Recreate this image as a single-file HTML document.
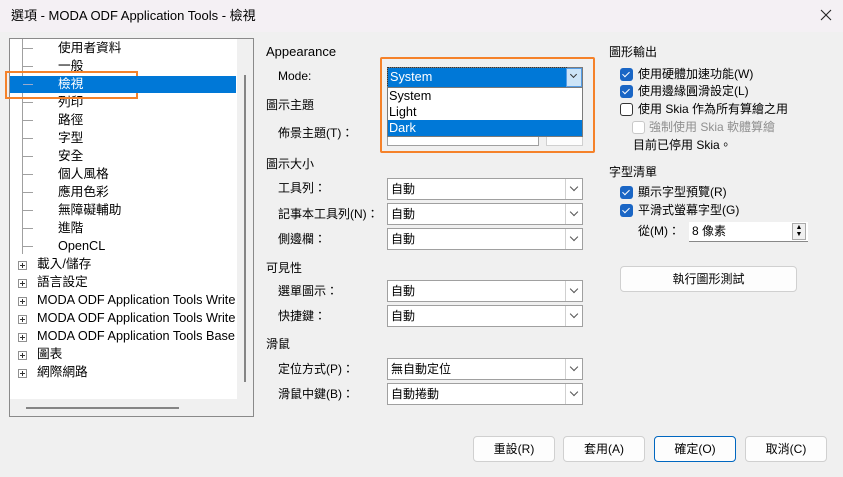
<!DOCTYPE html>
<html><head><meta charset="utf-8"><style>
*{margin:0;padding:0;box-sizing:border-box}
body{width:843px;height:477px;overflow:hidden;background:#f0f0f0;font-family:"Liberation Sans","Noto Sans CJK TC",sans-serif;font-size:12px;color:#000;position:relative}
.a{position:absolute;white-space:nowrap;line-height:16px}
.t{font-size:12.7px}
.title{position:absolute;left:0;top:0;width:843px;height:32px;background:#f4f0f4;}
.combo{position:absolute;height:22px;background:#fff;border:1px solid #a0a0a0;}
.combo span{position:absolute;left:3px;top:2px;line-height:16px}
.combo i{position:absolute;right:0;top:0;width:17px;height:20px;border-left:1px solid #d0d0d0}
.combo i:after{content:"";position:absolute;left:5px;top:5px;width:5px;height:5px;border-right:1px solid #555;border-bottom:1px solid #555;transform:rotate(45deg)}
.cb{position:absolute;width:13px;height:13px;border-radius:3px;background:#1a66c5}
.cb:after{content:"";position:absolute;left:4px;top:2px;width:3px;height:6px;border-right:1.5px solid #fff;border-bottom:1.5px solid #fff;transform:rotate(45deg)}
.cbe{position:absolute;width:13px;height:13px;border-radius:3px;border:1px solid #333;background:#fff}
.btn{position:absolute;height:26px;background:#fdfdfd;border:1px solid #d0d0d0;border-radius:4px;text-align:center;line-height:24px}
.dash{position:absolute;width:10px;height:1px;background:#a0a0a0}
.plus{position:absolute;width:9px;height:9px;border:1px solid #909090;background:#fff}
.plus:before{content:"";position:absolute;left:1px;top:3px;width:5px;height:1px;background:#333}
.plus:after{content:"";position:absolute;left:3px;top:1px;width:1px;height:5px;background:#333}
</style></head><body>
<div class="title"></div>
<div class="a" style="left:11px;top:8px;font-size:13px">選項 - MODA ODF Application Tools - 檢視</div>
<svg style="position:absolute;left:820px;top:9px" width="12" height="12"><path d="M1 1L11 11M11 1L1 11" stroke="#222" stroke-width="1.1"/></svg>

<div style="position:absolute;left:9px;top:38px;width:245px;height:379px;border:1px solid #8a8a8a;background:#f0f0f0"></div>
<div style="position:absolute;left:10px;top:39px;width:227px;height:360px;background:#fff"></div>
<div style="position:absolute;left:22px;top:39px;width:1px;height:215px;background:#a0a0a0"></div>
<div style="position:absolute;left:244px;top:75px;width:2px;height:307px;background:#858585"></div>
<div style="position:absolute;left:26px;top:407px;width:153px;height:2px;background:#858585"></div>

<div class="dash" style="left:23px;top:48px"></div><div class="a t" style="left:58px;top:40px">使用者資料</div>
<div class="dash" style="left:23px;top:66px"></div><div class="a t" style="left:58px;top:58px">一般</div>
<div class="dash" style="left:23px;top:102px"></div><div class="a t" style="left:58px;top:94px">列印</div>
<div class="dash" style="left:23px;top:120px"></div><div class="a t" style="left:58px;top:112px">路徑</div>
<div class="dash" style="left:23px;top:138px"></div><div class="a t" style="left:58px;top:130px">字型</div>
<div class="dash" style="left:23px;top:156px"></div><div class="a t" style="left:58px;top:148px">安全</div>
<div class="dash" style="left:23px;top:174px"></div><div class="a t" style="left:58px;top:166px">個人風格</div>
<div class="dash" style="left:23px;top:192px"></div><div class="a t" style="left:58px;top:184px">應用色彩</div>
<div class="dash" style="left:23px;top:210px"></div><div class="a t" style="left:58px;top:202px">無障礙輔助</div>
<div class="dash" style="left:23px;top:228px"></div><div class="a t" style="left:58px;top:220px">進階</div>
<div class="dash" style="left:23px;top:246px"></div><div class="a t" style="left:58px;top:238px">OpenCL</div>
<div class="plus" style="left:18px;top:261px"></div><div class="a t" style="left:37px;top:256px">載入/儲存</div>
<div class="plus" style="left:18px;top:279px"></div><div class="a t" style="left:37px;top:274px">語言設定</div>
<div class="plus" style="left:18px;top:297px"></div><div class="a t" style="left:37px;top:292px">MODA ODF Application Tools Write</div>
<div class="plus" style="left:18px;top:315px"></div><div class="a t" style="left:37px;top:310px">MODA ODF Application Tools Write</div>
<div class="plus" style="left:18px;top:333px"></div><div class="a t" style="left:37px;top:328px">MODA ODF Application Tools Base</div>
<div class="plus" style="left:18px;top:351px"></div><div class="a t" style="left:37px;top:346px">圖表</div>
<div class="plus" style="left:18px;top:369px"></div><div class="a t" style="left:37px;top:364px">網際網路</div>
<div style="position:absolute;left:237px;top:39px;width:7px;height:360px;background:#f0f0f0"></div>
<div style="position:absolute;left:5px;top:71px;width:133px;height:28px;border:2px solid #f5822a"></div>
<div style="position:absolute;left:10px;top:76px;width:226px;height:17px;background:#0078d7"></div>
<div class="a t" style="left:58px;top:76px;color:#fff">檢視</div>
<div class="dash" style="left:23px;top:84px;background:#9ac"></div>

<div class="a" style="left:266px;top:44px;font-size:13px">Appearance</div>
<div class="a" style="left:278px;top:68px">Mode:</div>
<div class="a" style="left:266px;top:97px">圖示主題</div>
<div class="a" style="left:278px;top:125px">佈景主題(T)：</div>
<div class="combo" style="left:387px;top:121px;width:152px;height:25px"><span>自動 (Colibre)</span></div>
<div class="btn" style="left:546px;top:121px;width:37px;height:25px"></div>
<div class="a" style="left:266px;top:156px">圖示大小</div>
<div class="a" style="left:278px;top:180px">工具列：</div>
<div class="combo" style="left:387px;top:178px;width:196px"><span>自動</span><i></i></div>
<div class="a" style="left:278px;top:206px">記事本工具列(N)：</div>
<div class="combo" style="left:387px;top:203px;width:196px"><span>自動</span><i></i></div>
<div class="a" style="left:278px;top:231px">側邊欄：</div>
<div class="combo" style="left:387px;top:228px;width:196px"><span>自動</span><i></i></div>
<div class="a" style="left:266px;top:260px">可見性</div>
<div class="a" style="left:278px;top:283px">選單圖示：</div>
<div class="combo" style="left:387px;top:280px;width:196px"><span>自動</span><i></i></div>
<div class="a" style="left:278px;top:308px">快捷鍵：</div>
<div class="combo" style="left:387px;top:305px;width:196px"><span>自動</span><i></i></div>
<div class="a" style="left:266px;top:336px">滑鼠</div>
<div class="a" style="left:278px;top:361px">定位方式(P)：</div>
<div class="combo" style="left:387px;top:358px;width:196px"><span>無自動定位</span><i></i></div>
<div class="a" style="left:278px;top:386px">滑鼠中鍵(B)：</div>
<div class="combo" style="left:387px;top:383px;width:196px"><span>自動捲動</span><i></i></div>

<div style="position:absolute;left:380px;top:57px;width:215px;height:96px;background:#f0f0f0;border:2px solid #f5822a;border-radius:2px"></div>
<div style="position:absolute;left:387px;top:67px;width:196px;height:21px;background:#fff;border:1px solid #7a7a7a"></div>
<div style="position:absolute;left:388px;top:68px;width:178px;height:19px;background:#0078d7;outline:1px dotted #333"></div>
<div class="a t" style="left:390px;top:69px;color:#fff">System</div>
<div style="position:absolute;left:566px;top:68px;width:16px;height:19px;background:#cce4f7;border:1px solid #569de5"></div>
<div style="position:absolute;left:571px;top:72px;width:5px;height:5px;border-right:1px solid #333;border-bottom:1px solid #333;transform:rotate(45deg)"></div>
<div style="position:absolute;left:387px;top:87px;width:196px;height:50px;background:#fff;border:1px solid #7a7a7a"></div>
<div class="a t" style="left:389px;top:88px">System</div>
<div class="a t" style="left:389px;top:104px">Light</div>
<div style="position:absolute;left:388px;top:120px;width:194px;height:16px;background:#0078d7"></div>
<div class="a t" style="left:389px;top:120px;color:#fff">Dark</div>
<div style="position:absolute;left:387px;top:137px;width:152px;height:9px;background:#fff;border:1px solid #a0a0a0;border-top:0"></div>
<div style="position:absolute;left:546px;top:137px;width:37px;height:9px;background:#fdfdfd;border:1px solid #d0d0d0;border-top:0"></div>

<div class="a" style="left:609px;top:44px">圖形輸出</div>
<div class="cb" style="left:620px;top:68px"></div><div class="a" style="left:638px;top:66px">使用硬體加速功能(W)</div>
<div class="cb" style="left:620px;top:85px"></div><div class="a" style="left:638px;top:83px">使用邊緣圓滑設定(L)</div>
<div class="cbe" style="left:620px;top:103px"></div><div class="a" style="left:638px;top:101px">使用 Skia 作為所有算繪之用</div>
<div class="cbe" style="left:632px;top:121px;border-color:#c8c8c8"></div><div class="a" style="left:649px;top:119px;color:#909090">強制使用 Skia 軟體算繪</div>
<div class="a" style="left:633px;top:137px">目前已停用 Skia。</div>
<div class="a" style="left:609px;top:164px">字型清單</div>
<div class="cb" style="left:620px;top:186px"></div><div class="a" style="left:638px;top:184px">顯示字型預覽(R)</div>
<div class="cb" style="left:620px;top:204px"></div><div class="a" style="left:638px;top:202px">平滑式螢幕字型(G)</div>
<div class="a" style="left:638px;top:223px">從(M)：</div>
<div style="position:absolute;left:689px;top:222px;width:119px;height:20px;background:#fff;border-bottom:1px solid #888"></div>
<div class="a" style="left:692px;top:223px">8 像素</div>
<div style="position:absolute;left:792px;top:223px;width:14px;height:17px;background:#f0f0f0;border:1px solid #aaa;font-size:7px;line-height:7px;text-align:center">▲<br>▼</div>
<div class="btn" style="left:620px;top:266px;width:177px">執行圖形測試</div>

<div class="btn" style="left:473px;top:436px;width:82px">重設(R)</div>
<div class="btn" style="left:563px;top:436px;width:82px">套用(A)</div>
<div class="btn" style="left:654px;top:436px;width:82px;border-color:#0067c0">確定(O)</div>
<div class="btn" style="left:745px;top:436px;width:82px">取消(C)</div>
</body></html>
